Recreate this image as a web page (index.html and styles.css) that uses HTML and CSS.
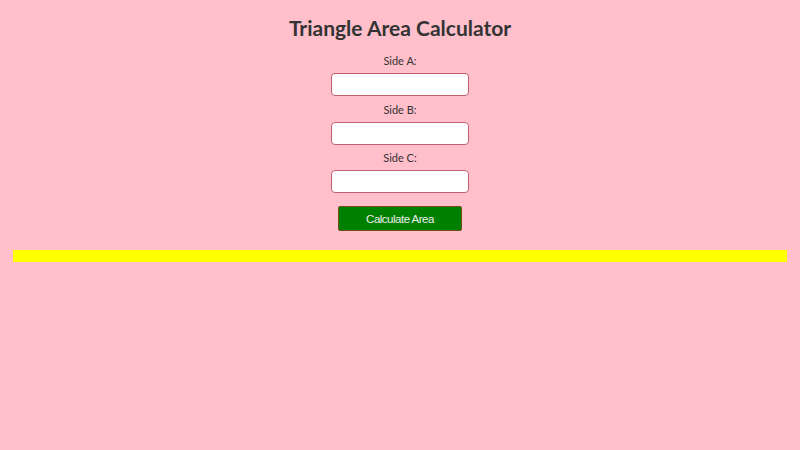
FILE: index.html
```html
<!DOCTYPE html>
<html lang="en">
<head>
  <meta charset="UTF-8">
  <title>Triangle Area Calculator</title>
  <link rel="stylesheet" href="styles.css">
</head>
<body>
  <div class="container">
    <h1>Triangle Area Calculator</h1>
    <form class="calc-form">
      <label for="sideA">Side A:</label>
      <input type="text" id="sideA">
      <label for="sideB">Side B:</label>
      <input type="text" id="sideB">
      <label for="sideC">Side C:</label>
      <input type="text" id="sideC">
      <button type="button">Calculate Area</button>
    </form>
    <div class="result" id="result"></div>
  </div>
</body>
</html>
```

FILE: styles.css
```css
body {
  margin: 8px;
  background-color: pink;
  font-family: Lato, sans-serif;
  color: #333;
}
.container {
  padding: 5px;
  text-align: center;
}
h1 {
  font-size: 21px;
  line-height: 30px;
  margin: 0 0 11px;
}
.calc-form {
  display: flex;
  flex-direction: column;
  align-items: center;
}
label {
  font-size: 11px;
  line-height: 14px;
  margin-bottom: 5px;
}
input[type="text"] {
  width: 138px;
  height: 23px;
  box-sizing: border-box;
  border: 1px solid #c0606e;
  border-radius: 4px;
  background: white;
  margin-bottom: 6.5px;
}
button {
  margin-top: 6.5px;
  width: 124px;
  height: 25px;
  background-color: green;
  color: #eee;
  border: 1px solid #7a4a1a;
  border-radius: 2px;
  font-family: "Liberation Sans", Arial, sans-serif;
  font-size: 11.5px;
  letter-spacing: -0.5px;
}
.result {
  margin-top: 19px;
  height: 12px;
  background-color: yellow;
}
```
